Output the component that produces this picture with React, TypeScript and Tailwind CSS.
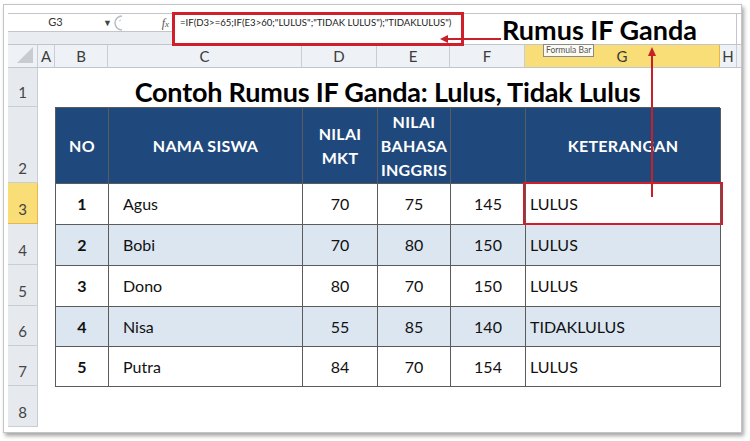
import React from "react"

const rows = [
  { no: 1, nama: "Agus", mkt: 70, bing: 75, total: 145, ket: "LULUS" },
  { no: 2, nama: "Bobi", mkt: 70, bing: 80, total: 150, ket: "LULUS" },
  { no: 3, nama: "Dono", mkt: 80, bing: 70, total: 150, ket: "LULUS" },
  { no: 4, nama: "Nisa", mkt: 55, bing: 85, total: 140, ket: "TIDAKLULUS" },
  { no: 5, nama: "Putra", mkt: 84, bing: 70, total: 154, ket: "LULUS" },
]

const rowHeights = [39, 76, 41, 41, 41, 40, 40, 41]
const dataHeights = [41, 41, 41, 40, 40]

const cols = [
  { l: "A", w: "w-[17px]" },
  { l: "B", w: "w-[53px]" },
  { l: "C", w: "w-[194px]" },
  { l: "D", w: "w-[75px]" },
  { l: "E", w: "w-[73px]" },
  { l: "F", w: "w-[75px]" },
  { l: "G", w: "w-[195px]" },
  { l: "H", w: "w-[17px]" },
]

const grid = "grid grid-cols-[53px_194px_75px_73px_75px_195px]"

export default function App() {
  return (
    <div className="min-h-screen bg-white font-['Lato','Open_Sans',sans-serif] text-[#111]">
      <div className="relative ml-[3px] mt-[4px] h-[429px] w-[739px] border border-[#c4c4c4] bg-white pl-[4px] pt-[8px] shadow-[2px_3px_4px_rgba(0,0,0,0.35)]">
        {/* formula bar */}
        <div className="flex h-[31px] border-t border-[#c2c6cc]">
          <div className="flex w-[164px] flex-col">
            <div className="flex h-[17px] items-center bg-white">
              <div className="w-[95px] text-center text-[11px] text-[#333]">G3</div>
              <span className="w-[8px] text-[9px] text-[#444]">▼</span>
              <svg width="12" height="16" viewBox="0 0 12 16" className="ml-[2px]">
                <path d="M9 1 A7 7 0 0 0 9 15" fill="none" stroke="#b8bcc2" strokeWidth="1.5" />
                <path d="M6 6 l2 -1" stroke="#c4c8cc" strokeWidth="1" />
              </svg>
              <span className="ml-auto mr-[3px] font-['Liberation_Serif',serif] text-[12px] italic text-[#555]">
                f<span className="text-[9px]">x</span>
              </span>
            </div>
            <div className="flex-1 border-t border-[#c2c6cc] bg-[#e9ecf0]" />
          </div>
          <div className="flex-1 border-l border-r border-[#c2c6cc] bg-white pl-[7px] pt-[2px] text-[9.6px] leading-[13px] text-[#222]">
            =IF(D3&gt;=65;IF(E3&gt;60;"LULUS";"TIDAK LULUS");"TIDAKLULUS")
          </div>
          <div className="w-[4px]" />
        </div>

        {/* column headers */}
        <div className="flex h-[24px] border-t border-b border-[#c2c6cc] bg-[#eef1f5] text-[15px] text-[#3c3c3c]">
          <div className="relative w-[30px] border-r border-[#c9ced6]">
            <svg width="18" height="18" viewBox="0 0 18 18" className="absolute bottom-[3px] right-[3px]">
              <path d="M17 1 L17 17 L1 17 Z" fill="#c8ccd2" />
            </svg>
          </div>
          {cols.map((c) => (
            <div
              key={c.l}
              className={`${c.w} flex items-center justify-center border-r ${
                c.l === "G" ? "border-[#e6b64a] bg-[#f9dd76]" : "border-[#c9ced6]"
              }`}
            >
              {c.l}
            </div>
          ))}
        </div>

        {/* sheet body */}
        <div className="flex">
          <div className="w-[30px] bg-[#e6e9ee] text-[15px] text-[#444]">
            {rowHeights.map((h, i) => (
              <div
                key={i}
                style={{ height: h }}
                className={`flex items-end justify-center border-b border-r pb-[3px] ${
                  i === 2 ? "border-[#e6b64a] bg-[#f9dd76]" : "border-[#c9ced6]"
                }`}
              >
                {i + 1}
              </div>
            ))}
          </div>
          <div className="w-[17px]" />
          <div className="w-[665px]">
            <div className="flex h-[39px] items-end justify-center pb-[2px] text-[27px] font-bold leading-none tracking-[-0.2px] text-black">
              Contoh Rumus IF Ganda: Lulus, Tidak Lulus
            </div>
            <div className="border-l border-t border-[#5b5b5b]">
              <div className={`${grid} h-[76px] bg-[#1f497d] text-[16px] font-bold leading-[24px] tracking-[0.3px] text-white`}>
                <div className="flex items-center justify-center border-r border-b border-[#5b5b5b]">NO</div>
                <div className="flex items-center justify-center border-r border-b border-[#5b5b5b]">NAMA SISWA</div>
                <div className="flex items-center justify-center border-r border-b border-[#5b5b5b] text-center">
                  NILAI
                  <br />
                  MKT
                </div>
                <div className="flex items-center justify-center border-r border-b border-[#5b5b5b] text-center">
                  NILAI
                  <br />
                  BAHASA
                  <br />
                  INGGRIS
                </div>
                <div className="border-r border-b border-[#5b5b5b]" />
                <div className="flex items-center justify-center border-r border-b border-[#5b5b5b]">KETERANGAN</div>
              </div>
              {rows.map((r, i) => (
                <div
                  key={r.no}
                  style={{ height: dataHeights[i] }}
                  className={`${grid} text-[16px] ${i % 2 === 1 ? "bg-[#dce6f1]" : "bg-white"}`}
                >
                  <div className="flex items-center justify-center border-r border-b border-[#5b5b5b] font-bold">{r.no}</div>
                  <div className="flex items-center border-r border-b border-[#5b5b5b] pl-[14px]">{r.nama}</div>
                  <div className="flex items-center justify-center border-r border-b border-[#5b5b5b]">{r.mkt}</div>
                  <div className="flex items-center justify-center border-r border-b border-[#5b5b5b]">{r.bing}</div>
                  <div className="flex items-center justify-center border-r border-b border-[#5b5b5b]">{r.total}</div>
                  <div className="flex items-center border-r border-b border-[#5b5b5b] pl-[4px]">{r.ket}</div>
                </div>
              ))}
            </div>
          </div>
        </div>

        {/* annotations */}
        <div className="absolute left-[168px] top-[7px] h-[34px] w-[292px] border-[3px] border-[#cf1f2a]" />
        <svg width="64" height="12" viewBox="0 0 64 12" className="absolute left-[434px] top-[28px]">
          <line x1="8" y1="6" x2="63" y2="6" stroke="#c62029" strokeWidth="2" />
          <path d="M2 6 L10 2 L10 10 Z" fill="#c62029" />
        </svg>
        <div className="absolute left-[498px] top-[14px] text-[27px] font-bold leading-[22px] text-black">
          Rumus IF Ganda
        </div>
        <div className="absolute left-[539px] top-[39px] border border-[#8a8a8a] bg-[#fbfbf4] px-[2px] text-[8.5px] leading-[11px] text-[#555]">
          Formula Bar
        </div>
        <svg width="12" height="152" viewBox="0 0 12 152" className="absolute left-[642px] top-[41px]">
          <line x1="6" y1="8" x2="6" y2="151" stroke="#c62029" strokeWidth="2" />
          <path d="M6 1 L2 10 L10 10 Z" fill="#c62029" />
        </svg>
        <div className="absolute left-[519px] top-[177px] h-[43px] w-[200px] border-2 border-[#cf1f2a]" />
      </div>
    </div>
  )
}
